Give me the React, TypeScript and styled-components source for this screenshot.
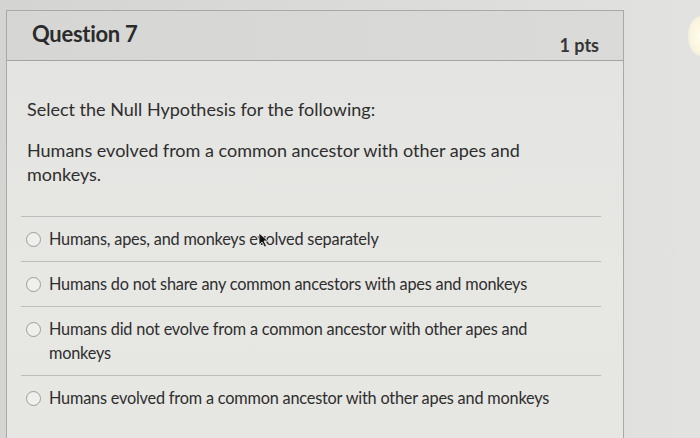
import React from "react";
import styled, { createGlobalStyle } from "styled-components";

const Global = createGlobalStyle`
  html, body { margin: 0; padding: 0; }
  body {
    width: 700px;
    height: 438px;
    overflow: hidden;
    background: linear-gradient(90deg, #d4d4d2 0%, #dcdcda 60%, #e2e2e0 100%);
    font-family: Lato, "Open Sans", sans-serif;
  }
`;

const Page = styled.div`
  position: relative;
  width: 700px;
  height: 438px;
  padding: 10px 0 0 6px;
  box-sizing: border-box;
`;

const Card = styled.div`
  width: 618px;
  height: 440px;
  border: 1px solid #a9a9a7;
  border-bottom: none;
  background: linear-gradient(180deg, #e3e3e1 0%, #e7e7e4 60%, #e6e6e2 100%);
  box-sizing: border-box;
`;

const Header = styled.div`
  height: 50px;
  display: flex;
  justify-content: space-between;
  align-items: flex-start;
  padding: 0 24px 0 25px;
  background: linear-gradient(90deg, #d6d6d5 0%, #dadad9 100%);
  border-bottom: 1px solid #a3a3a1;
  box-sizing: border-box;
`;

const Title = styled.div`
  font-size: 22px;
  font-weight: 700;
  color: #2b2b2b;
  margin-top: 9px;
  letter-spacing: -0.3px;
`;

const Points = styled.div`
  font-size: 18px;
  font-weight: 700;
  color: #363636;
  margin-top: 23px;
`;

const Body = styled.div`
  padding: 36px 20px 0 20px;
  color: #2e2e2e;
`;

const Prompt = styled.p`
  margin: 0 0 17px 0;
  font-size: 18px;
  line-height: 24px;
  letter-spacing: 0;
`;

const Statement = styled.p`
  margin: 0;
  font-size: 18px;
  line-height: 24px;
  width: 520px;
  letter-spacing: 0;
`;

const Answers = styled.div`
  margin: 30px 2px 0 -6px;
`;

const Answer = styled.div`
  display: flex;
  align-items: flex-start;
  gap: 8px;
  padding: 10px 0 10px 5px;
  border-top: 1px solid #bdbdbb;
`;

const Radio = styled.span`
  flex: none;
  width: 13px;
  height: 13px;
  margin-top: 5px;
  border-radius: 50%;
  border: 1px solid #9c9c9a;
  background: #efefed;
`;

const Label = styled.span`
  font-size: 16.3px;
  line-height: 24px;
  color: #2e2e2e;
  width: 520px;
  letter-spacing: -0.2px;
`;

const Cursor = styled.svg`
  position: absolute;
  left: 258px;
  top: 232px;
`;

const Glare = styled.div`
  position: absolute;
  right: -14px;
  top: 16px;
  width: 26px;
  height: 40px;
  border-radius: 50%;
  background: radial-gradient(ellipse at center, #fffdf2 0%, #fbf5de 55%, rgba(240,236,220,0) 100%);
`;

const answers = [
  "Humans, apes, and monkeys evolved separately",
  "Humans do not share any common ancestors with apes and monkeys",
  "Humans did not evolve from a common ancestor with other apes and monkeys",
  "Humans evolved from a common ancestor with other apes and monkeys",
];

export default function App() {
  return (
    <>
      <Global />
      <Page>
        <Card>
          <Header>
            <Title>Question 7</Title>
            <Points>1 pts</Points>
          </Header>
          <Body>
            <Prompt>Select the Null Hypothesis for the following:</Prompt>
            <Statement>
              Humans evolved from a common ancestor with other apes and monkeys.
            </Statement>
            <Answers>
              {answers.map((a) => (
                <Answer key={a}>
                  <Radio />
                  <Label>{a}</Label>
                </Answer>
              ))}
            </Answers>
          </Body>
        </Card>
        <Cursor width="12" height="16" viewBox="0 0 12 16">
          <path d="M1 1 L1 13 L4 10 L6.5 15 L8.5 14 L6 9 L10 9 Z" fill="#111" stroke="#eee" strokeWidth="0.8" />
        </Cursor>
        <Glare />
      </Page>
    </>
  );
}
